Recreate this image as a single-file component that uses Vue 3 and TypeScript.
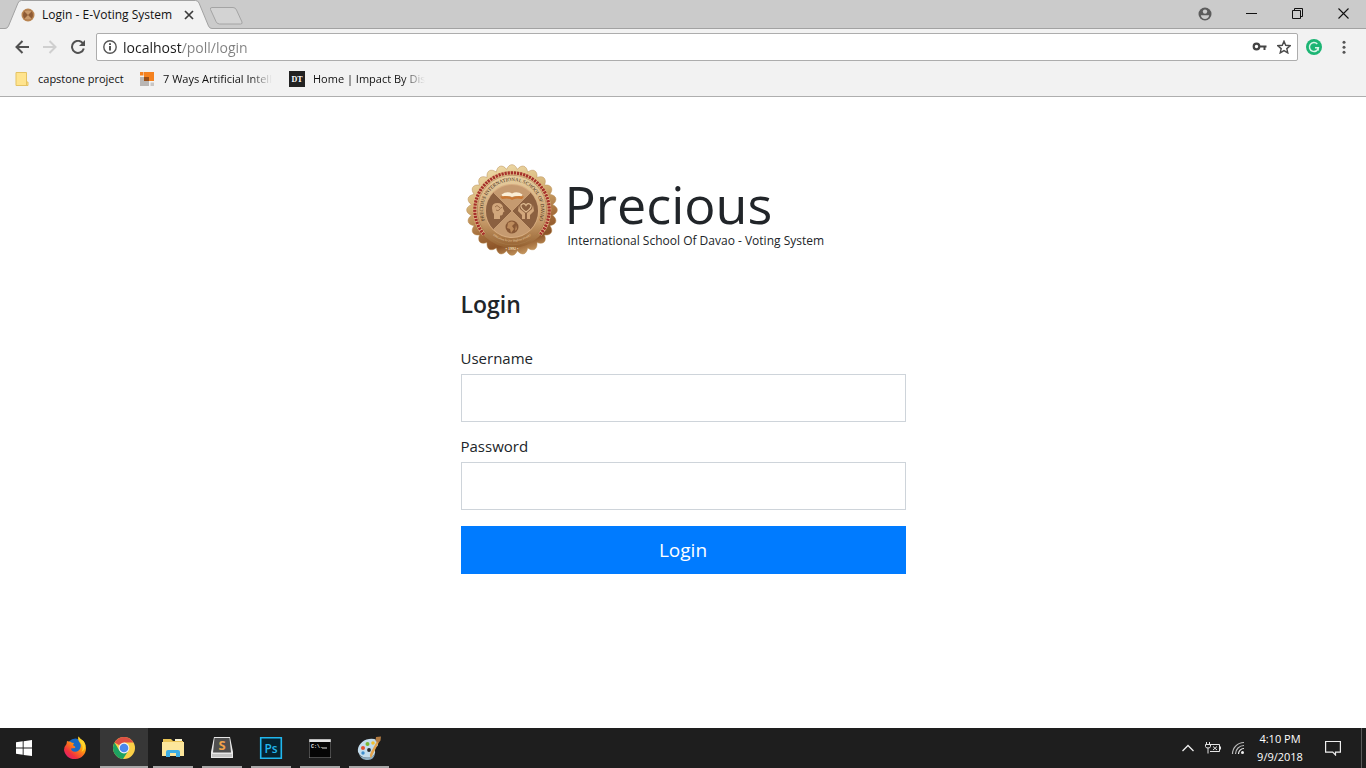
<script setup lang="ts">
import { ref } from 'vue'

const address = ref('localhost/poll/login')
const username = ref('')
const password = ref('')

interface Polar { x: number; y: number }
const polar = (radius: number, angle: number): Polar => ({
  x: Math.round(radius * Math.cos(angle) * 100) / 100,
  y: Math.round(radius * Math.sin(angle) * 100) / 100,
})

// Scalloped rim of the school seal
function scallops(count: number, outer: number, inner: number): string {
  const step = (Math.PI * 2) / count
  const start = polar(inner, -Math.PI / 2 - step / 2)
  let d = `M${start.x} ${start.y}`
  for (let i = 0; i < count; i++) {
    const mid = -Math.PI / 2 + i * step
    const a = polar(outer + 1, mid - step * 0.22)
    const b = polar(outer + 1, mid + step * 0.22)
    const end = polar(inner, mid + step / 2)
    d += `C${a.x} ${a.y} ${b.x} ${b.y} ${end.x} ${end.y}`
  }
  return d + 'Z'
}
const rim = scallops(24, 46, 41)

const apps = ['Firefox', 'Chrome', 'File Explorer', 'Sublime Text', 'Photoshop', 'Command Prompt', 'Paint']
</script>

<template>
  <div class="screen">
    <header class="browser">
      <div class="tabstrip">
        <div class="tab">
          <svg class="tab-shape" viewBox="0 0 208 29" preserveAspectRatio="none" aria-hidden="true">
            <path d="M0 28.5Q2.500 28.500 3.500 26L13 3Q14 .5 16.500 .5H190.500Q193 .5 194 3L203.500 26Q204.500 28.500 207 28.500H208V29H0Z" fill="#f2f2f2" />
            <path d="M0 28.5Q2.500 28.500 3.500 26L13 3Q14 .5 16.500 .5H190.500Q193 .5 194 3L203.500 26Q204.500 28.500 207 28.500H208" fill="none" stroke="#a2a2a2" />
          </svg>
          <svg class="favicon" viewBox="0 0 14 14" aria-hidden="true">
            <circle cx="7" cy="7" r="6.5" fill="#b98450" />
            <circle cx="7" cy="7" r="5" fill="#8e5b35" />
            <path d="M3.5 3.6 7 7l3.5-3.4A5 5 0 0 0 3.5 3.6ZM3.5 10.4 7 7l3.5 3.4a5 5 0 0 1-7 0Z" fill="#c99a6c" />
          </svg>
          <span class="tab-title">Login - E-Voting System</span>
          <button class="tab-close" type="button" aria-label="Close tab">
            <svg viewBox="0 0 10 10"><path d="m1 1 8 8M9 1 1 9" stroke="#3c3c3c" stroke-width="1.7" /></svg>
          </button>
        </div>
        <button class="new-tab" type="button" aria-label="New tab">
          <svg viewBox="0 0 36 18"><path d="M4 .5h21q2.500 0 3.500 2.500l5.500 12q.7 2-1.500 2h-21q-2.500 0-3.500-2.500l-5.500-12q-.7-2 1.500-2Z" fill="#d3d3d3" stroke="#a4a4a4" /></svg>
        </button>
        <div class="window-buttons">
          <button type="button" aria-label="Profile">
            <svg width="14" height="14" viewBox="0 0 14 14"><circle cx="7" cy="7" r="6.500" fill="#5c5c5c" /><circle cx="7" cy="4.600" r="2.200" fill="#cbcbcb" /><path d="M2.800 8.200h8.400Q10.400 12 7 12T2.800 8.200Z" fill="#cbcbcb" /></svg>
          </button>
          <button type="button" aria-label="Minimize">
            <svg width="11" height="11" viewBox="0 0 11 11"><path d="M0 5.500h11" stroke="#111" /></svg>
          </button>
          <button type="button" aria-label="Restore">
            <svg width="11" height="11" viewBox="0 0 11 11"><path d="M.5 2.500h8v8h-8zM2.500 2.500v-2h8v8h-2" fill="none" stroke="#111" /></svg>
          </button>
          <button type="button" aria-label="Close">
            <svg width="11" height="11" viewBox="0 0 11 11"><path d="m.5.5 10 10M10.500.5l-10 10" stroke="#111" stroke-width="1.100" /></svg>
          </button>
        </div>
      </div>

      <div class="toolbar">
        <button type="button" aria-label="Back">
          <svg width="14" height="14" viewBox="0 0 14 14"><path d="M14 7H1.500M7.500 1l-6 6 6 6" fill="none" stroke="#515151" stroke-width="2" /></svg>
        </button>
        <button type="button" aria-label="Forward" disabled>
          <svg width="14" height="14" viewBox="0 0 14 14"><path d="M0 7h12.500M6.500 1l6 6-6 6" fill="none" stroke="#cfcfcf" stroke-width="2" /></svg>
        </button>
        <button type="button" aria-label="Reload">
          <svg width="14" height="14" viewBox="0 0 14 14"><path d="M12 3.500A6 6 0 1 0 12.800 8.500" fill="none" stroke="#515151" stroke-width="2" /><path d="M14 0v6H8Z" fill="#515151" /></svg>
        </button>
        <div class="omnibox">
          <svg width="14" height="14" viewBox="0 0 14 14" aria-hidden="true"><circle cx="7" cy="7" r="6.200" fill="none" stroke="#555" stroke-width="1.400" /><path d="M7 6v4.500M7 3.200v1.700" stroke="#444" stroke-width="1.800" /></svg>
          <input v-model="address" class="address" type="text" aria-label="Address" />
          <svg width="15" height="10" viewBox="0 0 15 10" aria-hidden="true"><circle cx="4.500" cy="4.500" r="2.800" fill="none" stroke="#444" stroke-width="2.200" /><path d="M8 3.500h6.500v2h-1v2.500h-2V5.500H8Z" fill="#444" /></svg>
          <button type="button" class="star" aria-label="Bookmark this page">
            <svg width="14" height="14" viewBox="0 0 14 14"><path d="m7 1.200 1.700 4.100 4.500.4-3.400 2.900 1 4.300L7 10.600l-3.800 2.300 1-4.300L.8 5.700l4.500-.4Z" fill="none" stroke="#4a4a4a" stroke-width="1.400" /></svg>
          </button>
        </div>
        <button type="button" class="grammar" aria-label="Grammarly">
          <svg width="16" height="16" viewBox="0 0 16 16"><circle cx="8" cy="8" r="8" fill="#1cb574" /><path d="M11.300 5A4.500 4.500 0 1 0 12.400 8.800H9" fill="none" stroke="#d8f6e8" stroke-width="1.500" /><path d="M12.800 8.500v3.400L10.600 10Z" fill="#d8f6e8" /></svg>
        </button>
        <button type="button" aria-label="Menu">
          <svg width="4" height="14" viewBox="0 0 4 14"><g fill="#555"><circle cx="2" cy="2.300" r="1.500" /><circle cx="2" cy="7.300" r="1.500" /><circle cx="2" cy="12.300" r="1.500" /></g></svg>
        </button>
      </div>

      <nav class="bookmarks" aria-label="Bookmarks">
        <a href="#" class="bookmark">
          <svg width="16" height="16" viewBox="0 0 16 16" aria-hidden="true"><path d="M2 1.500h10.500V11H14v3.500H2Z" fill="#ffe48e" stroke="#e5c363" /><path d="M12.500 10.500V14" stroke="#e5c363" /></svg>
          <span>capstone project</span>
        </a>
        <a href="#" class="bookmark faded">
          <svg width="16" height="16" viewBox="0 0 16 16" aria-hidden="true"><path d="M5 1h10v9H5z" fill="#f58220" /><path d="M1 1h3.500v3.500H1z" fill="#f58220" /><path d="M1 6h4v4h5v5H1z" fill="#b9b6b4" /><path d="M5 6h5v4H5z" fill="#9a4f17" /><path d="M11.500 11.500H15V15h-3.500z" fill="#c9c6c4" /></svg>
          <span>7 Ways Artificial Intell</span>
        </a>
        <a href="#" class="bookmark faded">
          <svg width="16" height="16" viewBox="0 0 16 16" aria-hidden="true"><path d="M0 0h16v16H0z" fill="#222" /><text x="8" y="11" text-anchor="middle" class="dt">DT</text></svg>
          <span>Home | Impact By Dis</span>
        </a>
      </nav>
    </header>

    <main class="page">
      <div class="column">
        <div class="brand">
          <svg class="seal" viewBox="-48 -48 96 96" role="img" aria-label="School seal">
            <defs>
              <linearGradient id="gold" x1="0.3" y1="0" x2="0.6" y2="1">
                <stop offset="0" stop-color="#efdcaa" />
                <stop offset="0.35" stop-color="#d6b477" />
                <stop offset="0.65" stop-color="#a8713e" />
                <stop offset="0.85" stop-color="#8c5428" />
                <stop offset="1" stop-color="#c89a62" />
              </linearGradient>
              <linearGradient id="ring" x1="0" y1="0" x2="0" y2="1">
                <stop offset="0" stop-color="#ead3a4" />
                <stop offset="0.6" stop-color="#cda271" />
                <stop offset="1" stop-color="#94602f" />
              </linearGradient>
              <path id="arc-top" d="M-20.500 20.500A29 29 0 1 1 20.500 20.500" />
              <path id="arc-bottom" d="M-24 20.500A31.500 31.500 0 0 0 24 20.500" />
            </defs>
            <path :d="rim" fill="url(#gold)" stroke="#b98d55" stroke-width="0.5" />
            <circle r="38" fill="url(#ring)" />
            <path d="M-28 24.500A37.200 37.200 0 1 1 28 24.500" fill="none" stroke="#e3bf8b" stroke-width="4" />
            <path d="M-28 24.500A37.200 37.200 0 1 1 28 24.500" fill="none" stroke="#a5302a" stroke-width="3.200" stroke-dasharray="2.200 0.900" />
            <circle r="34.800" fill="none" stroke="#a87a49" stroke-width="0.600" />
            <text class="seal-text"><textPath href="#arc-top" startOffset="50%" text-anchor="middle">PRECIOUS INTERNATIONAL SCHOOL OF DAVAO</textPath></text>
            <circle cy="1" r="27" fill="#d7ac80" />
            <circle cy="1" r="26" fill="#c59a70" />
            <path d="M0 1-18.400-17.400A26 26 0 0 0-18.400 19.400ZM0 1 18.400-17.400A26 26 0 0 1 18.400 19.400Z" fill="#8b6040" />
            <path d="M-18.400-17.400 18.400 19.400M18.400-17.400-18.400 19.400" stroke="#d2a77c" stroke-width="0.800" />
            <path d="M-10.500-15.500Q-5-19.500 0-16.500 5-19.500 10.500-15.500L9-13Q4-15 0-13-4-15-9-13Z" fill="#fbeed6" />
            <path d="M-12-13.500Q-5-15 0-12.500 5-15 12-13.500L10-11Q3-12.500 0-10-3-12.500-10-11Z" fill="#c97835" />
            <path d="M-20-2Q-20-7-14.500-7-9-7-9-1.500L-7.500 1.500-9 2.500Q-9 5.500-11 5.500H-12V9H-18V4Q-20 2-20-2Z" fill="#d2a77c" />
            <path d="M-17-3q2-3 4 0t3 0M-16 0q2 2 4-1" fill="none" stroke="#9c704b" stroke-width="1" />
            <path d="M9-5Q12-8 14-4.500 16-8 19-5 20-2 14 2 8-2 9-5Z" fill="#8b6040" stroke="#e0bc91" stroke-width="1.200" />
            <path d="M7-5 6 1l4 4v4h3V3L8-1ZM21-5l1 6-4 4v4h-3V3l5-4Z" fill="#d2a77c" />
            <circle cy="17" r="6.500" fill="#875735" />
            <path d="M-4 13Q0 10 3 13L0 16l2 3-3 4-1-4-3-1ZM4 15l1 4-2 2Z" fill="#bd8b5c" />
            <text class="seal-small"><textPath href="#arc-bottom" startOffset="50%" text-anchor="middle">Education Is Our Highest Priority</textPath></text>
            <text x="0" y="40" text-anchor="middle" class="seal-year">• 1992 •</text>
          </svg>
          <div class="brand-text">
            <h1>Precious</h1>
            <p>International School Of Davao - Voting System</p>
          </div>
        </div>

        <h2>Login</h2>

        <form @submit.prevent>
          <div class="field">
            <label for="username">Username</label>
            <input id="username" v-model="username" type="text" />
          </div>
          <div class="field">
            <label for="password">Password</label>
            <input id="password" v-model="password" type="password" />
          </div>
          <button class="submit" type="submit">Login</button>
        </form>
      </div>
    </main>

    <footer class="taskbar">
      <button type="button" class="start" aria-label="Start">
        <svg width="16" height="16" viewBox="0 0 16 16"><path d="M0 2.300 6.700 1.300V7.600H0ZM7.600 1.200 16 0v7.600H7.600ZM0 8.500h6.700v6.300L0 13.800ZM7.600 8.500H16V16L7.600 14.900Z" fill="#fff" /></svg>
      </button>
      <div class="apps">
        <button v-for="app in apps" :key="app" type="button" class="app" :class="{ active: app === 'Chrome', open: app !== 'Firefox' }" :aria-label="app">
          <svg v-if="app === 'Firefox'" viewBox="0 0 24 24">
            <defs>
              <linearGradient id="fox" x1="0.9" y1="0" x2="0.1" y2="1"><stop offset="0" stop-color="#ffe226" /><stop offset="0.4" stop-color="#ff980e" /><stop offset="0.75" stop-color="#f3313d" /><stop offset="1" stop-color="#d91c7d" /></linearGradient>
            </defs>
            <circle cx="12.500" cy="11.500" r="9" fill="#1769c4" />
            <path d="M4 5 3.500 8Q.8 11 1 14C2 20 7 23.500 12.500 23 19 22.500 23 18 23 12 23 8 21 5 19 4 17 2.500 16 1 15.500.5 14.500 3 15.500 5 17 7 19 10 17 15.500 12.500 15.800 9.500 16 8 14.200 8 12.500L12 12Q13 10.500 10.500 9.800 9.500 9 11 7 8.500 7 7.500 5.800 5.500 5.500 4 5Z" fill="url(#fox)" />
            <path d="M15.500.5Q15 4 18 7.500 21 11.500 18.500 16 23 13 22 8 21 5 19 4 16.500 2.500 15.500.5Z" fill="#ffd52b" />
          </svg>
          <svg v-else-if="app === 'Chrome'" viewBox="0 0 24 24">
            <circle cx="12" cy="12" r="11" fill="#fbcf47" />
            <path d="M12 12 2.500 6.500A11 11 0 0 1 21.500 6.500H12Z" fill="#dd5044" />
            <path d="M2.500 6.500A11 11 0 0 0 11 23L16.500 14.500 12 12 7.300 14.500Z" fill="#1da261" />
            <circle cx="12" cy="12" r="5.400" fill="#f3f3f3" /><circle cx="12" cy="12" r="4.300" fill="#4a88ee" />
          </svg>
          <svg v-else-if="app === 'File Explorer'" viewBox="0 0 24 24">
            <path d="M2 3h8l2 2h10v15H2Z" fill="#eac455" /><path d="M1 6h22v14H1Z" fill="#fce69b" /><path d="M14 3h7v2h-7z" fill="#f8f0ce" />
            <path d="M5 21v-5q0-2 2-2h10q2 0 2 2v5h-4v-4H9v4Z" fill="#3eaee4" />
          </svg>
          <svg v-else-if="app === 'Sublime Text'" viewBox="0 0 24 24">
            <path d="M4 1h16l3 15v6H1v-6Z" fill="#e7e7e7" /><path d="M4.500 2h15l1.500 14.500H3Z" fill="#4f4f4f" /><path d="M2 18h20v3H2z" fill="#c4c4c4" />
            <text x="12" y="14" text-anchor="middle" class="sublime">S</text>
          </svg>
          <svg v-else-if="app === 'Photoshop'" viewBox="0 0 24 24">
            <path d="M1.700 1.700h20.600v20.600H1.700z" fill="#052330" stroke="#21b7ee" stroke-width="1.600" /><text x="12" y="16.500" text-anchor="middle" class="ps">Ps</text>
          </svg>
          <svg v-else-if="app === 'Command Prompt'" viewBox="0 0 24 24">
            <path d="M1 3h22v19H1z" fill="#8f8f8f" /><path d="M1.500 6h21v15.500h-21z" fill="#050505" /><path d="M1.500 3.500h21V6h-21z" fill="#e5e5e5" />
            <text x="3" y="12" class="cmd">C:\.</text><path d="M14 12h5" stroke="#ddd" />
          </svg>
          <svg v-else viewBox="0 0 24 24">
            <path d="M1 16C0 10 5 4 12 3q9-1 9 5 0 3-3 3-2 1 0 3.500Q19 19 13 21.500 4 23 1 16Z" fill="#c3dcec" />
            <path d="M2 17q1 4 6 4.500 7 .5 10-4-1 7-9 6.500Q3 23 2 17Z" fill="#8faec2" />
            <circle cx="6" cy="12" r="2" fill="#e4502f" /><circle cx="10.500" cy="8" r="2" fill="#79b833" /><circle cx="16" cy="7" r="1.800" fill="#f2c12e" /><circle cx="6" cy="17" r="1.700" fill="#3d8dcd" /><circle cx="12" cy="14" r="1.900" fill="#252525" />
            <path d="M13.500 22Q12 19 14 16L20 5l2 1-6 12Q15 21 13.500 22Z" fill="#e2a24c" /><path d="m18.500 5 .5-4 5-.500-.500 4L21.500 7Z" fill="#b17b42" />
          </svg>
        </button>
      </div>
      <div class="tray">
        <button type="button" aria-label="Show hidden icons"><svg width="12" height="8" viewBox="0 0 12 8"><path d="m.5 7 5.500-5.500L11.500 7" fill="none" stroke="#eee" stroke-width="1.300" /></svg></button>
        <button type="button" aria-label="Battery"><svg width="16" height="12" viewBox="0 0 16 12"><path d="M5 2.500h9.500v7H5M15.500 4.500v3M8 4.500l4 3.500M12 4.500 8 8" fill="none" stroke="#e5e5e5" /><path d="M1.500 0v2.500M4.500 0v2.500M.5 2.500h5v2q0 1.500-2.500 1.500T.5 4.500ZM3 6v5.500" fill="none" stroke="#e5e5e5" /></svg></button>
        <button type="button" aria-label="Wi-Fi"><svg width="14" height="14" viewBox="0 0 14 14"><g fill="none" stroke="#bbb" stroke-width="1.200"><path d="M1.500 13A11.500 11.500 0 0 1 13 1.500" /><path d="M4.500 13A8.500 8.500 0 0 1 13 4.500" /><path d="M7.500 13A5.500 5.500 0 0 1 13 7.500" stroke="#eee" /></g><circle cx="11.500" cy="11.500" r="1.500" fill="#eee" /></svg></button>
        <button type="button" class="clock"><span>4:10 PM</span><span>9/9/2018</span></button>
        <button type="button" aria-label="Notifications" class="notify"><svg width="16" height="16" viewBox="0 0 16 16"><path d="M.6 1.500h14.800v10.700H10.500V15L7.700 12.200H.6Z" fill="none" stroke="#eee" stroke-width="1.200" /></svg></button>
      </div>
    </footer>
  </div>
</template>

<style>
body {
  margin: 0;
}
</style>

<style scoped>
.screen {
  display: flex;
  flex-direction: column;
  min-height: 100vh;
  background: #fff;
  color: #212529;
  font-family: "Open Sans", "Noto Sans", sans-serif;
}
.screen *,
.screen {
  box-sizing: border-box;
}
svg {
  display: block;
  flex: none;
}
button,
input {
  font: inherit;
  color: inherit;
  margin: 0;
  padding: 0;
  border: 0;
  background: none;
  outline-offset: 2px;
}
button {
  display: flex;
  align-items: center;
  justify-content: center;
}
.browser {
  background: #f2f2f2;
  border-bottom: 1px solid #aeaeae;
  color: #111;
}
.tabstrip {
  display: flex;
  height: 29px;
  padding-left: 5px;
  background: linear-gradient(#a2a2a2, #a2a2a2) bottom / 100% 1px no-repeat #cbcbcb;
}
.tab {
  position: relative;
  display: flex;
  align-items: center;
  width: 208px;
  padding: 0 19px 0 16px;
  font-size: 12px;
}
.tab-shape {
  position: absolute;
  inset: 0;
  width: 100%;
  height: 100%;
}
.favicon {
  position: relative;
  width: 14px;
  height: 14px;
}
.tab-title {
  position: relative;
  flex: 1;
  margin-left: 7px;
  white-space: nowrap;
}
.tab-close {
  position: relative;
}
.tab-close svg {
  width: 10px;
  height: 10px;
}
.new-tab svg {
  width: 36px;
  height: 18px;
}
.new-tab {
  margin-left: -5px;
  padding-top: 2px;
}
.window-buttons {
  display: flex;
  margin-left: auto;
  padding-bottom: 2px;
}
.window-buttons button {
  width: 46px;
}
.toolbar {
  display: flex;
  align-items: center;
  height: 36px;
  padding: 0 8px;
}
.toolbar > button {
  width: 28px;
  height: 28px;
}
.omnibox {
  display: flex;
  flex: 1;
  align-items: center;
  height: 28px;
  margin-left: 4px;
  padding: 0 6px;
  background: #fff;
  border: 1px solid #adadad;
  border-radius: 2px;
}
.address {
  flex: 1;
  min-width: 0;
  height: 26px;
  margin-left: 6px;
  font-size: 14px;
  color: transparent;
  background: linear-gradient(to right, #1c1c1c 59px, #808080 59px);
  background-clip: text;
  -webkit-background-clip: text;
}
.star {
  margin-left: 10px;
}
.toolbar > .grammar {
  width: 32px;
}
.bookmarks {
  display: flex;
  align-items: center;
  gap: 13px;
  height: 31px;
  padding: 0 14px 4px;
  font-size: 11px;
}
.bookmark {
  display: flex;
  align-items: center;
  gap: 8px;
  width: 112px;
  color: #111;
  text-decoration: none;
  white-space: nowrap;
}
.bookmark.faded {
  width: 137px;
}
.faded span {
  mask-image: linear-gradient(to right, #000 80%, transparent);
}
.dt {
  font: bold 8px "Liberation Serif", serif;
  fill: #fff;
}
.page {
  flex: 1;
  padding: 65px 15px 40px;
}
.column {
  width: 100%;
  max-width: 445px;
  margin: 0 auto;
}
.brand {
  display: flex;
  align-items: center;
  gap: 5px;
  padding-left: 3px;
}
.seal {
  width: 96px;
  height: 96px;
}
.seal-text {
  font: 5px "Liberation Serif", serif;
  fill: #3f2916;
}
.seal-small {
  font: 3px "Liberation Serif", serif;
  fill: #f3ddb8;
}
.seal-year {
  font: bold 4px "Liberation Serif", serif;
  fill: #f3ddb8;
}
.brand-text {
  padding-top: 2px;
  white-space: nowrap;
}
h1 {
  margin: 0;
  font-size: 52px;
  font-weight: 400;
  line-height: 60px;
}
p {
  margin: 0;
  padding-left: 3px;
  font-size: 12px;
  line-height: 14px;
}
h2 {
  margin: 30px 0 0;
  font-size: 23px;
  font-weight: 600;
  line-height: 32px;
}
form {
  margin-top: 26px;
}
.field {
  margin-bottom: 12px;
}
.field label {
  display: block;
  padding-bottom: 4px;
  font-size: 15px;
  line-height: 24px;
}
.field input {
  display: block;
  width: 100%;
  height: 48px;
  padding: 8px 16px;
  border: 1px solid #ced4da;
  font-size: 18px;
}
.submit {
  width: 100%;
  height: 48px;
  margin-top: 16px;
  background: #007bff;
  color: #fff;
  font-size: 19px;
}
.taskbar {
  display: flex;
  height: 40px;
  background: #1e1e1e;
  color: #fff;
}
.start {
  width: 48px;
}
.apps {
  display: flex;
  gap: 1px;
  margin-left: 3px;
}
.app {
  width: 48px;
  background-position: bottom;
  background-repeat: no-repeat;
  background-size: 40px 2px;
}
.app svg {
  width: 24px;
  height: 24px;
}
.app.open {
  background-image: linear-gradient(#a8a8a8, #a8a8a8);
}
.app.active {
  background-color: #373737;
  background-size: 100% 2px;
}
.sublime {
  font: bold 13px "Open Sans", sans-serif;
  fill: #f0a34a;
}
.ps {
  font: 600 12px "Open Sans", sans-serif;
  fill: #21b7ee;
}
.cmd {
  font: bold 5px "Liberation Mono", monospace;
  fill: #eee;
}
.tray {
  display: flex;
  margin-left: auto;
  padding-right: 4px;
  background: linear-gradient(#5a5a5a, #5a5a5a) right 4px top / 1px 100% no-repeat;
}
.tray button {
  width: 25px;
}
.tray .clock {
  flex-direction: column;
  width: 60px;
  font-size: 11px;
  line-height: 18px;
}
.tray .notify {
  width: 46px;
  margin-right: 6px;
}
</style>
